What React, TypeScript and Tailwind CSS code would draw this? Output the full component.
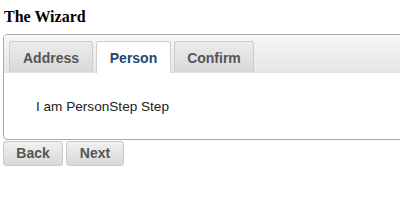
import React from "react";

const tabs = [
  { label: "Address", w: "w-[84px]" },
  { label: "Person", w: "w-[75px]", active: true },
  { label: "Confirm", w: "w-[80px]" },
];

export default function App() {
  return (
    <div className="w-[400px] h-[205px] bg-white overflow-hidden">
      {/* Title */}
      <h4 className="pl-[4px] pt-[5px] h-[34px] text-[16px] font-bold text-black font-['Liberation_Serif',serif]">
        The Wizard
      </h4>

      {/* Tabs panel */}
      <div className="ml-[3px] w-[410px] border border-[#aaaaaa] rounded-[4px] font-['Liberation_Sans',Arial,sans-serif]">
        <div className="h-[38px] flex items-end gap-[3px] pl-[5px] border-b border-[#e4e4e4] bg-gradient-to-b from-[#f7f7f7] to-[#e6e6e6] rounded-t-[3px]">
          {tabs.map((t) => (
            <div
              key={t.label}
              className={`${t.w} h-[31px] pt-[2px] flex items-center justify-center rounded-t-[3px] border border-b-0 text-[14px] font-bold ${
                t.active
                  ? "bg-white border-[#cfcfcf] text-[#1e4870] h-[32px] -mb-px"
                  : "bg-gradient-to-b from-[#ececec] to-[#d8d8d8] border-[#cccccc] text-[#555555]"
              }`}
            >
              {t.label}
            </div>
          ))}
        </div>
        <div className="h-[66px] pl-[32px] pt-[24px] text-[13.6px] text-[#222222]">
          I am PersonStep Step
        </div>
      </div>

      {/* Buttons */}
      <div className="flex gap-[3px] ml-[3px] mt-[1px] font-['Liberation_Sans',Arial,sans-serif]">
        <button className="w-[60px] h-[25px] rounded-[3px] border border-[#c8c8c8] bg-gradient-to-b from-[#f0f0f0] to-[#d9d9d9] text-[14px] font-bold text-[#555555]">
          Back
        </button>
        <button className="w-[58px] h-[25px] rounded-[3px] border border-[#c8c8c8] bg-gradient-to-b from-[#f0f0f0] to-[#d9d9d9] text-[14px] font-bold text-[#555555]">
          Next
        </button>
      </div>
    </div>
  );
}
